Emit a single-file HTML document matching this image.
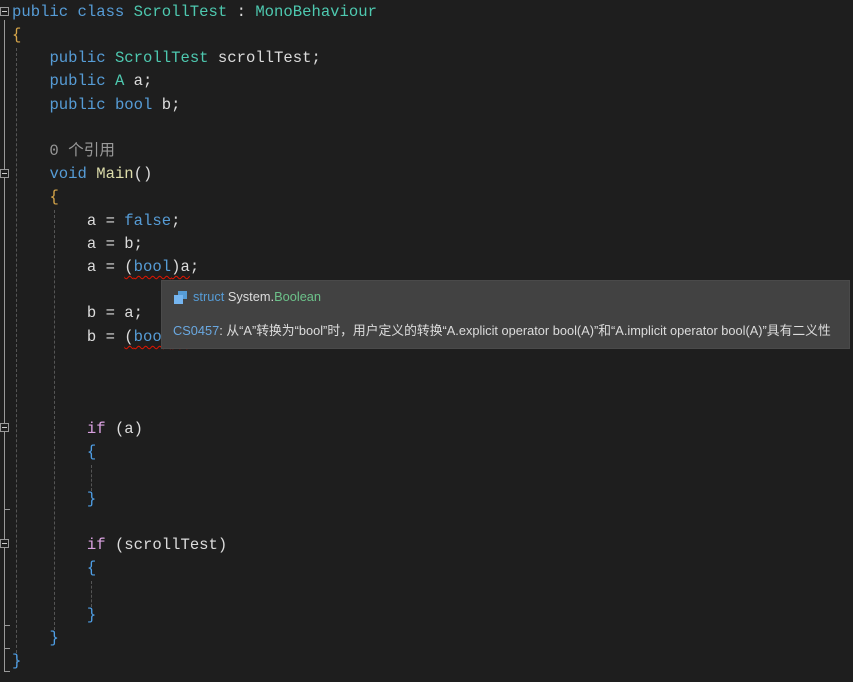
<!DOCTYPE html>
<html><head><meta charset="utf-8"><style>
html,body{margin:0;padding:0;background:#1e1e1e;width:853px;height:682px;overflow:hidden;position:relative}
.l{position:absolute;left:12px;height:23.2px;line-height:23.2px;white-space:pre;font-family:"Liberation Mono","Noto Sans CJK SC",monospace;font-size:15.6px;color:#dcdcdc}
.k{color:#569cd6}.t{color:#4ec9b0}.m{color:#dcdcaa}.c{color:#999}.p{color:#d8a0df}
.b1{color:#d7a64a}.b3{color:#4f9fe6}
.sq{text-decoration:underline wavy #e51400;text-underline-offset:4px;text-decoration-thickness:1px}
.g{position:absolute;width:0;border-left:1px dashed #555}
.fold{position:absolute;left:0;width:7px;height:7px;border:1px solid #999;background:#1e1e1e}
.fold:after{content:"";position:absolute;left:1px;top:3px;width:5px;height:1px;background:#ccc}
.tip{position:absolute;left:161px;top:280px;width:687px;height:67px;background:#424242;border:1px solid #4a4a4a;font-family:"Liberation Sans","Noto Sans CJK SC",sans-serif;font-size:12.8px;color:#dcdcdc}
</style></head><body>
<div style="position:absolute;left:4px;top:20px;width:1px;height:652px;background:#999"></div>
<div style="position:absolute;left:4px;top:671px;width:6px;height:1px;background:#999"></div>
<div style="position:absolute;left:4px;top:648px;width:6px;height:1px;background:#999"></div>
<div style="position:absolute;left:4px;top:509px;width:6px;height:1px;background:#999"></div>
<div style="position:absolute;left:4px;top:625px;width:6px;height:1px;background:#999"></div>
<div class="fold" style="top:7px"></div>
<div class="fold" style="top:169px"></div>
<div class="fold" style="top:423px"></div>
<div class="fold" style="top:539px"></div>
<div class="g" style="left:16px;top:48px;height:620px"></div>
<div class="g" style="left:54px;top:210px;height:420px"></div>
<div class="g" style="left:91px;top:465px;height:26px"></div>
<div class="g" style="left:91px;top:581px;height:26px"></div>

<div class="l" style="top:1px"><span class="k">public class</span> <span class="t">ScrollTest</span> : <span class="t">MonoBehaviour</span></div>
<div class="l b1" style="top:24px">{</div>
<div class="l" style="top:47px">    <span class="k">public</span> <span class="t">ScrollTest</span> scrollTest;</div>
<div class="l" style="top:70px">    <span class="k">public</span> <span class="t">A</span> a;</div>
<div class="l" style="top:94px">    <span class="k">public bool</span> b;</div>
<div class="l c" style="top:140px">    0 个引用</div>
<div class="l" style="top:163px">    <span class="k">void</span> <span class="m">Main</span>()</div>
<div class="l" style="top:186px">    <span class="b1">{</span></div>
<div class="l" style="top:210px">        a = <span class="k">false</span>;</div>
<div class="l" style="top:233px">        a = b;</div>
<div class="l" style="top:256px">        a = <span class="sq">(<span class="k">bool</span>)a</span>;</div>
<div class="l" style="top:302px">        b = a;</div>
<div class="l" style="top:326px">        b = <span class="sq">(<span class="k">bool</span>)a</span>;</div>
<div class="l" style="top:418px">        <span class="p">if</span> (a)</div>
<div class="l" style="top:441px">        <span class="b3">{</span></div>
<div class="l" style="top:488px">        <span class="b3">}</span></div>
<div class="l" style="top:534px">        <span class="p">if</span> (scrollTest)</div>
<div class="l" style="top:557px">        <span class="b3">{</span></div>
<div class="l" style="top:604px">        <span class="b3">}</span></div>
<div class="l" style="top:627px">    <span class="b3">}</span></div>
<div class="l b3" style="top:650px">}</div>

<div class="tip">
<svg style="position:absolute;left:12px;top:10px" width="14" height="13"><rect x="4" y="0" width="9" height="8" fill="#569cd6"/><rect x="0" y="4" width="9" height="9" fill="#75b5f0"/></svg>
<div style="position:absolute;left:31px;top:8px"><span style="color:#569cd6">struct</span> System.<span style="color:#6cc28a">Boolean</span></div>
<div style="position:absolute;left:11px;top:39px;white-space:nowrap"><span style="color:#6aa8e0">CS0457</span>: 从“A”转换为“bool”时，用户定义的转换“A.explicit operator bool(A)”和“A.implicit operator bool(A)”具有二义性</div>
</div>
</body></html>
